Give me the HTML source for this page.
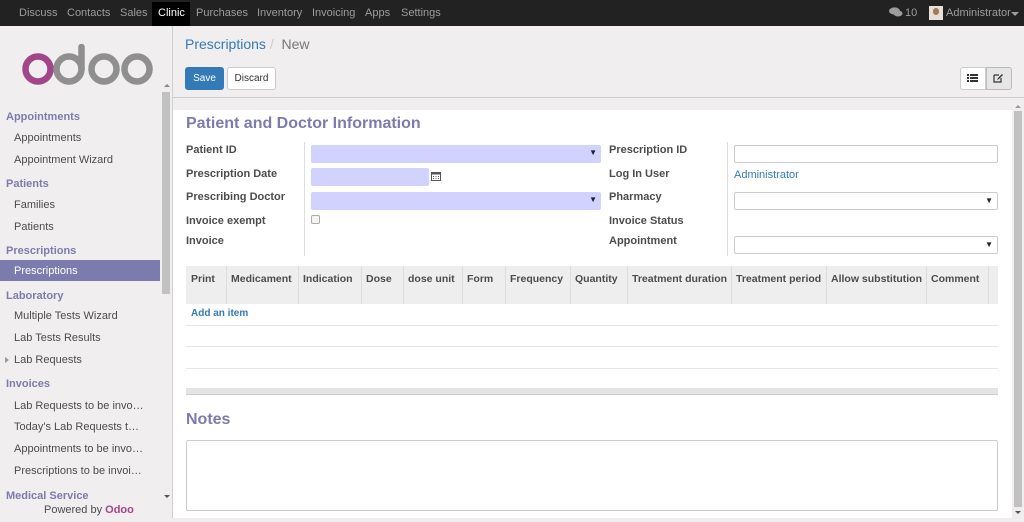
<!DOCTYPE html>
<html><head><meta charset="utf-8"><style>
*{box-sizing:border-box;margin:0;padding:0}
body{width:1024px;height:518px;overflow:hidden;font-family:"Liberation Sans",sans-serif;font-size:11px;color:#4c4c4c;background:#f0eeee;position:relative}
.a{position:absolute}
.nav{left:0;top:0;width:1024px;height:26px;background:#222}
.nav span{position:absolute;top:7px;color:#9d9d9d;font-size:11px}
.side{left:0;top:26px;width:173px;height:492px;background:#f0eeee;border-right:1px solid #d0d0d0}
.sh{position:absolute;left:6px;color:#7c7bad;font-weight:bold;font-size:11px}
.si{position:absolute;left:14px;color:#4c4c4c;font-size:11px}
.lbl{position:absolute;font-weight:bold;color:#4c4c4c;font-size:11px}
.inp{position:absolute;height:18px;background:#d2d2ff;border-radius:2px}
.inw{position:absolute;height:18px;background:#fff;border:1px solid #ccc;border-radius:2px}
.car{position:absolute;right:4px;top:3px;font-size:8px;color:#222}
.th{position:absolute;top:273px;font-weight:bold;color:#4c4c4c;font-size:10.5px}
.cl{position:absolute;top:266px;width:1px;height:38px;background:#ddd}
.hl{position:absolute;left:186px;width:812px;height:1px;background:#e6e6e6}
</style></head><body>
<div class="a nav">
<span style="left:19px">Discuss</span><span style="left:67px">Contacts</span><span style="left:120px">Sales</span>
<div class="a" style="left:152px;top:2px;width:38px;height:24px;background:#000"></div>
<span style="left:158px;color:#fff">Clinic</span><span style="left:196px">Purchases</span><span style="left:257px">Inventory</span><span style="left:312px">Invoicing</span><span style="left:365px">Apps</span><span style="left:401px">Settings</span>
<svg class="a" style="left:889px;top:7px" width="14" height="11" viewBox="0 0 14 11"><ellipse cx="5.5" cy="4" rx="5.5" ry="3.6" fill="#9d9d9d"/><ellipse cx="9" cy="6.5" rx="4.5" ry="3" fill="#9d9d9d"/></svg>
<span style="left:905px">10</span>
<div class="a" style="left:929px;top:6px;width:14px;height:14px;background:#e8e0d8"><div class="a" style="left:4px;top:2px;width:6px;height:7px;background:#a07a5a;border-radius:3px"></div></div>
<span style="left:946px">Administrator</span>
<div class="a" style="left:1011px;top:12px;border:4px solid transparent;border-top-color:#9d9d9d;border-bottom:none"></div>
</div>
<div class="a side">
<svg class="a" style="left:18px;top:18px" width="136" height="44" viewBox="0 0 136 44">
<circle cx="20" cy="25" r="12.5" fill="none" stroke="#a24689" stroke-width="6.5"/>
<circle cx="51" cy="25" r="12.5" fill="none" stroke="#8f8f8f" stroke-width="6.5"/>
<line x1="63.5" y1="3" x2="63.5" y2="25" stroke="#8f8f8f" stroke-width="6.5" stroke-linecap="round"/>
<circle cx="86" cy="25" r="12.5" fill="none" stroke="#8f8f8f" stroke-width="6.5"/>
<circle cx="119" cy="25" r="12.5" fill="none" stroke="#8f8f8f" stroke-width="6.5"/>
</svg>
<div class="sh" style="top:85px">Appointments</div>
<div class="si" style="top:106px">Appointments</div>
<div class="si" style="top:128px">Appointment Wizard</div>
<div class="sh" style="top:152px">Patients</div>
<div class="si" style="top:173px">Families</div>
<div class="si" style="top:195px">Patients</div>
<div class="sh" style="top:219px">Prescriptions</div>
<div class="a" style="left:0;top:234px;width:160px;height:21px;background:#7c7bad"></div>
<div class="si" style="top:239px;color:#fff">Prescriptions</div>
<div class="sh" style="top:264px">Laboratory</div>
<div class="si" style="top:284px">Multiple Tests Wizard</div>
<div class="si" style="top:306px">Lab Tests Results</div>
<div class="a" style="left:5px;top:331px;border:3px solid transparent;border-left:4px solid #999;border-right:none"></div>
<div class="si" style="top:328px">Lab Requests</div>
<div class="sh" style="top:352px">Invoices</div>
<div class="si" style="top:374px">Lab Requests to be invo…</div>
<div class="si" style="top:395px">Today's Lab Requests t…</div>
<div class="si" style="top:417px">Appointments to be invo…</div>
<div class="si" style="top:439px">Prescriptions to be invoi…</div>
<div class="sh" style="top:464px">Medical Service</div>
<div class="a" style="left:161px;top:56px;width:10px;height:440px;background:#f0eeee"></div>
<div class="a" style="left:162px;top:66px;width:8px;height:202px;background:#c1c1c1"></div>
<div class="a" style="left:164px;top:58px;border:3px solid transparent;border-bottom:3px solid #888;border-top:none"></div>
<div class="a" style="left:164px;top:469px;border:3px solid transparent;border-top:3px solid #555;border-bottom:none"></div>
<div class="a" style="left:44px;top:478px;font-size:11px;color:#4c4c4c">Powered by <b style="color:#a24689">Odoo</b></div>
</div>
<div class="a" style="left:185px;top:36px;font-size:14px;color:#337ab7">Prescriptions <span style="color:#ccc">/</span> <span style="color:#777">&nbsp;New</span></div>
<div class="a" style="left:185px;top:67px;width:39px;height:23px;background:#337ab7;border-radius:3px;color:#fff;font-size:10px;text-align:center;line-height:23px">Save</div>
<div class="a" style="left:227px;top:67px;width:49px;height:23px;background:#fff;border:1px solid #ccc;border-radius:3px;color:#333;font-size:10px;text-align:center;line-height:21px">Discard</div>
<div class="a" style="left:960px;top:67px;width:26px;height:23px;background:#fff;border:1px solid #ccc;border-radius:3px 0 0 3px"></div>
<svg class="a" style="left:967px;top:73px" width="11" height="10" viewBox="0 0 11 10"><g fill="#333"><rect x="0" y="1" width="2" height="2"/><rect x="3" y="1" width="8" height="2"/><rect x="0" y="4" width="2" height="2"/><rect x="3" y="4" width="8" height="2"/><rect x="0" y="7" width="2" height="2"/><rect x="3" y="7" width="8" height="2"/></g></svg>
<div class="a" style="left:986px;top:67px;width:26px;height:23px;background:#e6e6e6;border:1px solid #bbb;border-radius:0 3px 3px 0"></div>
<svg class="a" style="left:993px;top:73px" width="11" height="10" viewBox="0 0 11 10"><path d="M1 2h5M1 2v7h7V5" fill="none" stroke="#333" stroke-width="1.2"/><path d="M4 7l1-2 4-4 1 1-4 4z" fill="#333"/></svg>
<div class="a" style="left:173px;top:97px;width:851px;height:1px;background:#ccc"></div>
<div class="a" style="left:173px;top:110px;width:839px;height:408px;background:#fff"></div>
<div class="a" style="left:1013px;top:104px;width:10px;height:414px;background:#f0eeee"></div>
<div class="a" style="left:1014px;top:111px;width:8px;height:396px;background:#c1c1c1"></div>
<div class="a" style="left:1015px;top:105px;border:3px solid transparent;border-bottom:3px solid #999;border-top:none"></div>
<div class="a" style="left:1015px;top:511px;border:3px solid transparent;border-top:3px solid #555;border-bottom:none"></div>
<div class="a" style="left:186px;top:115px;font-size:16px;font-weight:bold;color:#7c7bad">Patient and Doctor Information</div>
<div class="lbl" style="left:186px;top:144px">Patient ID</div>
<div class="lbl" style="left:186px;top:168px">Prescription Date</div>
<div class="lbl" style="left:186px;top:191px">Prescribing Doctor</div>
<div class="lbl" style="left:186px;top:215px">Invoice exempt</div>
<div class="lbl" style="left:186px;top:235px">Invoice</div>
<div class="a" style="left:304px;top:142px;width:1px;height:114px;background:#ddd"></div>
<div class="inp" style="left:311px;top:145px;width:290px"><span class="car">▼</span></div>
<div class="inp" style="left:311px;top:168px;width:118px"></div>
<svg class="a" style="left:431px;top:171px" width="10" height="10" viewBox="0 0 10 10"><rect x="0.5" y="1.5" width="9" height="8" fill="none" stroke="#555"/><rect x="0.5" y="1.5" width="9" height="2" fill="#555"/><g fill="#555"><rect x="2" y="5" width="1" height="1"/><rect x="4.5" y="5" width="1" height="1"/><rect x="7" y="5" width="1" height="1"/><rect x="2" y="7" width="1" height="1"/><rect x="4.5" y="7" width="1" height="1"/><rect x="7" y="7" width="1" height="1"/></g></svg>
<div class="inp" style="left:311px;top:192px;width:290px"><span class="car">▼</span></div>
<div class="a" style="left:311px;top:215px;width:9px;height:9px;border:1px solid #aaa;border-radius:2px;background:#f4f4f4"></div>
<div class="lbl" style="left:609px;top:144px">Prescription ID</div>
<div class="lbl" style="left:609px;top:168px">Log In User</div>
<div class="lbl" style="left:609px;top:191px">Pharmacy</div>
<div class="lbl" style="left:609px;top:215px">Invoice Status</div>
<div class="lbl" style="left:609px;top:235px">Appointment</div>
<div class="a" style="left:727px;top:142px;width:1px;height:114px;background:#ddd"></div>
<div class="inw" style="left:734px;top:145px;width:264px"></div>
<div class="a" style="left:734px;top:169px;color:#337ab7;font-size:11px">Administrator</div>
<div class="inw" style="left:734px;top:192px;width:264px"><span class="car">▼</span></div>
<div class="inw" style="left:734px;top:236px;width:264px"><span class="car">▼</span></div>
<div class="a" style="left:186px;top:266px;width:812px;height:38px;background:#eee"></div>
<div class="th" style="left:191px">Print</div><div class="cl" style="left:226px"></div>
<div class="th" style="left:231px">Medicament</div><div class="cl" style="left:298px"></div>
<div class="th" style="left:303px">Indication</div><div class="cl" style="left:361px"></div>
<div class="th" style="left:366px">Dose</div><div class="cl" style="left:403px"></div>
<div class="th" style="left:408px">dose unit</div><div class="cl" style="left:462px"></div>
<div class="th" style="left:467px">Form</div><div class="cl" style="left:505px"></div>
<div class="th" style="left:510px">Frequency</div><div class="cl" style="left:570px"></div>
<div class="th" style="left:575px">Quantity</div><div class="cl" style="left:627px"></div>
<div class="th" style="left:632px">Treatment duration</div><div class="cl" style="left:731px"></div>
<div class="th" style="left:736px">Treatment period</div><div class="cl" style="left:826px"></div>
<div class="th" style="left:831px">Allow substitution</div><div class="cl" style="left:926px"></div>
<div class="th" style="left:931px">Comment</div><div class="cl" style="left:988px"></div>
<div class="a" style="left:191px;top:308px;color:#337ab7;font-weight:bold;font-size:10px">Add an item</div>
<div class="hl" style="top:325px"></div>
<div class="hl" style="top:346px"></div>
<div class="hl" style="top:368px"></div>
<div class="a" style="left:186px;top:388px;width:812px;height:7px;background:#e4e4e4;border-bottom:1px solid #ccc"></div>
<div class="a" style="left:186px;top:411px;font-size:16px;font-weight:bold;color:#7c7bad">Notes</div>
<div class="a" style="left:186px;top:440px;width:812px;height:71px;border:1px solid #ccc;border-radius:2px;background:#fff"></div>
</body></html>
